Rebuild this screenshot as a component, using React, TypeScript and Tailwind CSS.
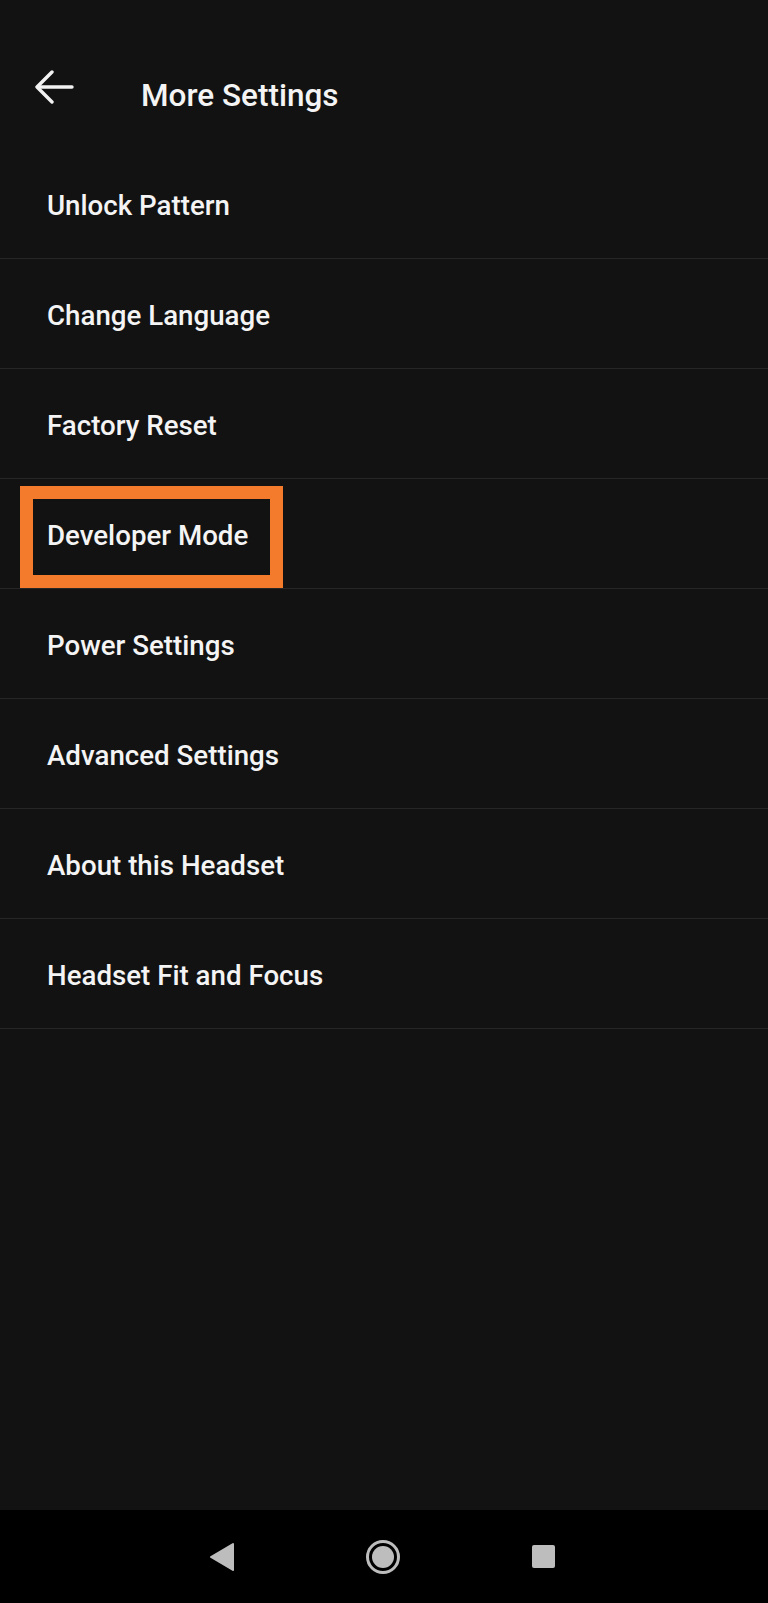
import React from "react";

// items
const items = [
  "Unlock Pattern",
  "Change Language",
  "Factory Reset",
  "Developer Mode",
  "Power Settings",
  "Advanced Settings",
  "About this Headset",
  "Headset Fit and Focus",
];

const BackArrow = () => (
  <svg width="40" height="34" viewBox="0 0 40 34" fill="none" stroke="#f2f2f2" strokeWidth="3.4" strokeLinecap="round" strokeLinejoin="round">
    <path d="M37 17H3" />
    <path d="M17 2L2 17l15 15" />
  </svg>
);

const App = () => {
  return (
    <div
      className="w-[768px] h-[1603px] bg-[#121212] flex flex-col text-[#f4f4f4]"
      style={{ fontFamily: "Roboto, 'Noto Sans', sans-serif" }}
    >
      {/* header */}
      <div className="h-[149px] flex items-start pt-[70px]">
        <div className="pl-[35px] w-[141px]">
          <BackArrow />
        </div>
        <h1 className="text-[31.5px] font-medium leading-none mt-[10px]">More Settings</h1>
      </div>

      {/* list */}
      <div className="flex flex-col">
        {items.map((label) => (
          <div
            key={label}
            className="relative h-[110px] border-b border-[#262626] flex items-center pl-[47px] pt-[4px]"
          >
            <span className="text-[27.7px] font-medium">{label}</span>
            {label === "Developer Mode" && (
              <div className="absolute left-[20px] top-[7px] w-[263px] h-[102px] border-[13px] border-[#f47a2c]" />
            )}
          </div>
        ))}
      </div>

      <div className="flex-1" />

      {/* nav bar */}
      <div className="h-[93px] bg-black flex items-center pl-[209px]">
        <svg width="26" height="30" viewBox="0 0 26 30">
          <path d="M24 2L2 15l22 13z" fill="#bdbdbd" stroke="#bdbdbd" strokeWidth="2" strokeLinejoin="round" />
        </svg>
        <svg width="36" height="36" viewBox="0 0 36 36" className="ml-[130px]">
          <circle cx="18" cy="18" r="15.5" fill="none" stroke="#bdbdbd" strokeWidth="3" />
          <circle cx="18" cy="18" r="11" fill="#bdbdbd" />
        </svg>
        <div className="ml-[131px] w-[23px] h-[23px] bg-[#bdbdbd] rounded-[2px]" />
      </div>
    </div>
  );
};

export default App;
